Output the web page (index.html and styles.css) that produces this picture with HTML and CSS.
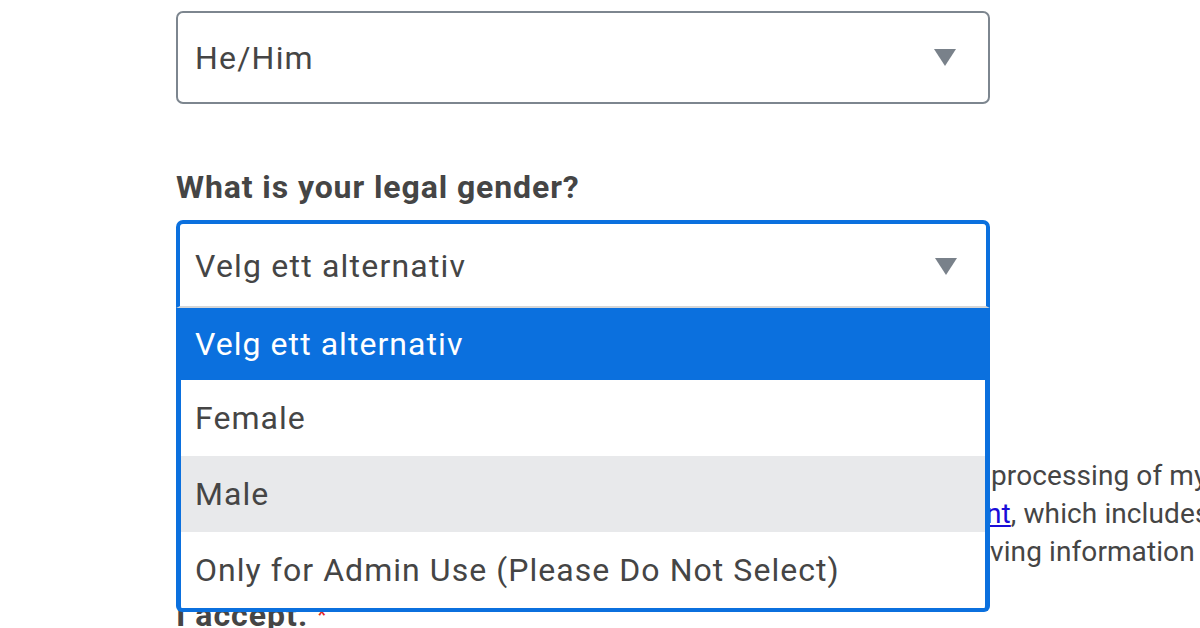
FILE: index.html
```html
<!DOCTYPE html>
<html lang="en">
<head>
<meta charset="utf-8">
<title>Form</title>
<link rel="stylesheet" href="styles.css">
</head>
<body>
<div class="form">
  <div class="select">
    <span class="value">He/Him</span>
    <svg class="caret" width="22" height="17" viewBox="0 0 22 17"><path d="M0 0H22L11 17Z"/></svg>
  </div>

  <label class="label">What is your legal gender?</label>

  <div class="combo">
    <div class="select select-open">
      <span class="value">Velg ett alternativ</span>
      <svg class="caret" width="22" height="17" viewBox="0 0 22 17"><path d="M0 0H22L11 17Z"/></svg>
    </div>
    <ul class="listbox">
      <li class="opt opt-first selected">Velg ett alternativ</li>
      <li class="opt">Female</li>
      <li class="opt hover">Male</li>
      <li class="opt">Only for Admin Use (Please Do Not Select)</li>
    </ul>
  </div>

  <div class="consent">
    <div class="line l1">processing of my personal data</div>
    <div class="line l2"><a href="#">nt</a>, which includes the</div>
    <div class="line l3">ving information &nbsp;to partners</div>
  </div>

  <p class="accept">I accept. <span class="req">*</span></p>
</div>
</body>
</html>
```

FILE: styles.css
```css
html, body {
  margin: 0;
  padding: 0;
  background: #fff;
  overflow: hidden;
}

body {
  width: 1200px;
  height: 628px;
  font-family: Roboto, "Liberation Sans", Arial, sans-serif;
  color: #454545;
}

.form {
  padding: 11px 0 0 176px;
  width: 814px;
}

.select {
  box-sizing: border-box;
  height: 93px;
  border: 2px solid #7d868f;
  border-radius: 7px;
  display: flex;
  align-items: center;
  justify-content: space-between;
  padding: 0 32px 0 17px;
  font-size: 32px;
  letter-spacing: 1.2px;
}

.caret {
  fill: #79818a;
  flex: none;
}

.value {
  white-space: nowrap;
}

.label {
  display: block;
  margin-top: 64px;
  font-size: 32px;
  line-height: 38px;
  font-weight: 700;
  letter-spacing: 0.9px;
}

.combo {
  position: relative;
  margin-top: 14px;
  z-index: 2;
}

.select-open {
  height: 88px;
  border: 4px solid #0b70de;
  border-bottom: 2px solid #d6d6d6;
  border-radius: 7px 7px 0 0;
  padding: 2px 29px 0 15px;
}

.listbox {
  position: absolute;
  top: 100%;
  left: 0;
  width: 814px;
  box-sizing: border-box;
  margin: 0;
  padding: 0;
  list-style: none;
  background: #fff;
  border: 5px solid #0b70de;
  border-top: 0;
  border-bottom-width: 4px;
  border-radius: 0 0 6px 6px;
}

.opt {
  height: 76px;
  display: flex;
  align-items: center;
  padding-left: 14px;
  font-size: 32px;
  letter-spacing: 1.05px;
  white-space: nowrap;
}

.opt-first {
  height: 72px;
}

.selected {
  background: #0b70de;
  color: #fff;
}

.hover {
  background: #e8e9eb;
}

.consent {
  margin-top: 149px;
  font-size: 28px;
  line-height: 38px;
  letter-spacing: 0.1px;
  width: 1100px;
}

.line {
  white-space: nowrap;
}

.l1 { margin-left: 815px; }
.l2 { margin-left: 810px; }
.l3 { margin-left: 814px; }

.consent a {
  color: #1a0dd8;
  text-decoration: underline;
}

.accept {
  margin: 25px 0 0;
  font-size: 32px;
  line-height: 38px;
  font-weight: 700;
  letter-spacing: 1px;
  white-space: nowrap;
}

.req {
  color: #e0261f;
  font-size: 20px;
  vertical-align: top;
}
```
